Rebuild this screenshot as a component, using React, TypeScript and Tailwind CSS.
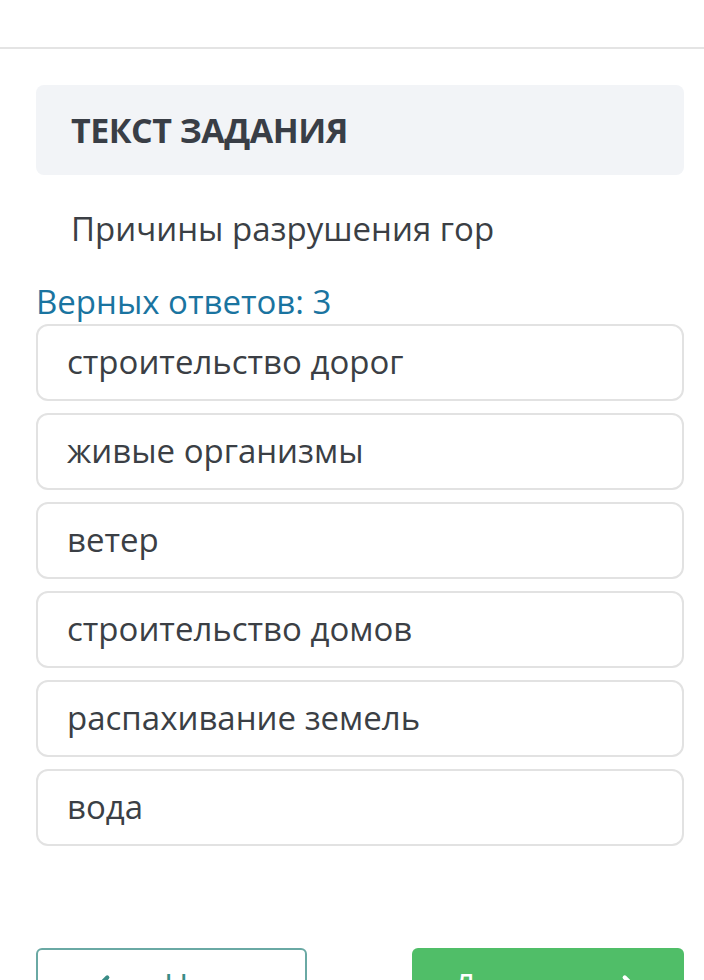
import React from 'react';
import { ChevronLeft, ChevronRight } from 'lucide-react';

const options = [
  'строительство дорог',
  'живые организмы',
  'ветер',
  'строительство домов',
  'распахивание земель',
  'вода',
];

export default function App() {
  return (
    <div className="min-h-screen bg-white font-['Open_Sans',sans-serif] text-[#3b3f45]">
      {/* top bar */}
      <div className="h-[49px] border-b-2 border-[#e4e4e4]" />

      <div className="pl-9 pr-5 pt-9">
        <div className="rounded-lg bg-[#f2f4f7] px-[35px] h-[90px] flex items-center">
          <h2 className="text-[34px] font-bold tracking-[-0.5px] text-[#393e46]">ТЕКСТ ЗАДАНИЯ</h2>
        </div>

        <p className="mt-[30px] px-[35px] text-[33px] leading-[48px] text-[#3b3f45]">Причины разрушения гор</p>

        <p className="mt-[29px] text-[33px] leading-[40px] text-[#1a74a0]">Верных ответов: 3</p>

        <div className="mt-[2px] flex flex-col gap-[12px]">
          {options.map((o) => (
            <div
              key={o}
              className="h-[77px] rounded-xl border-2 border-[#e2e2e2] px-[29px] flex items-center text-[33px] text-[#3b3f45]"
            >
              <span className="-mt-[1px]">{o}</span>
            </div>
          ))}
        </div>

        {/* nav buttons */}
        <div className="mt-[102px] flex justify-between">
          <button className="w-[271px] h-[76px] rounded-md border-2 border-[#6aa9a4] bg-white flex items-center pl-[48px] gap-[44px] text-[33px] text-[#3a8c86]">
            <ChevronLeft size={34} strokeWidth={3} />
            <span>Назад</span>
          </button>
          <button className="w-[272px] h-[76px] rounded-md bg-[#50be68] flex items-center justify-between pl-[41px] pr-[38px] text-[33px] text-white">
            <span>Далее</span>
            <ChevronRight size={34} strokeWidth={3} />
          </button>
        </div>
      </div>
    </div>
  );
}
